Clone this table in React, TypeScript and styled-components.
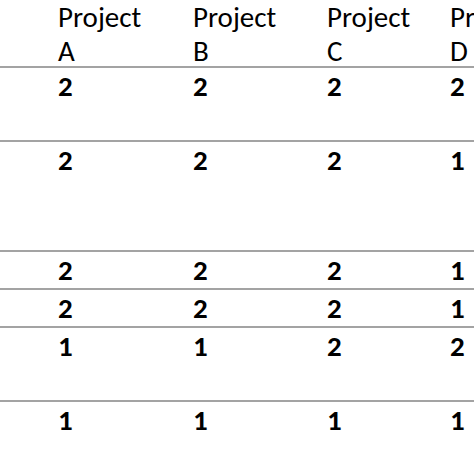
import styled, { createGlobalStyle } from "styled-components";

const GlobalStyle = createGlobalStyle`
    html, body {
        margin: 0;
        padding: 0;
        background: #ffffff;
        overflow: hidden;
    }
    body {
        font-family: Carlito, Calibri, Lato, "Liberation Sans", sans-serif;
    }
`;

const StyledPage = styled.div`
    width: 474px;
    height: 474px;
    overflow: hidden;
    background: #ffffff;
    color: #000000;
`;

const StyledTable = styled.div`
    font-size: 29px;
    line-height: 36px;
`;

const StyledRow = styled.div<{ $lines: number; $head?: boolean }>`
    display: grid;
    grid-template-columns: 58px 135px 134px 123px 1fr;
    height: ${(p) => (p.$head ? 66 : p.$lines * 36)}px;
    border-top: ${(p) => (p.$head ? "none" : "2px solid #a3a3a3")};
`;

const StyledHeadCell = styled.div`
    display: flex;
    flex-direction: column;
    gap: 2px;
    font-weight: normal;
    white-space: nowrap;
`;

const StyledHeadLine = styled.span<{ $height: number }>`
    line-height: ${(p) => p.$height}px;
`;

const StyledCell = styled.div`
    font-weight: bold;
    white-space: nowrap;
`;

const projects = ["A", "B", "C", "D"];

// 각 행: 라벨 줄 수 + 프로젝트별 값
const rows = [
    { lines: 2, values: [2, 2, 2, 2] },
    { lines: 3, values: [2, 2, 2, 1] },
    { lines: 1, values: [2, 2, 2, 1] },
    { lines: 1, values: [2, 2, 2, 1] },
    { lines: 2, values: [1, 1, 2, 2] },
    { lines: 2, values: [1, 1, 1, 1] },
];

const App = () => {
    return (
        <StyledPage>
            <GlobalStyle />
            <StyledTable>
                <StyledRow $lines={2} $head>
                    <StyledHeadCell />
                    {projects.map((p) => (
                        <StyledHeadCell key={p}>
                            <StyledHeadLine $height={35}>Project</StyledHeadLine>
                            <StyledHeadLine $height={29}>{p}</StyledHeadLine>
                        </StyledHeadCell>
                    ))}
                </StyledRow>
                {rows.map((row, i) => (
                    <StyledRow key={i} $lines={row.lines}>
                        <StyledCell />
                        {row.values.map((v, j) => (
                            <StyledCell key={j}>{v}</StyledCell>
                        ))}
                    </StyledRow>
                ))}
            </StyledTable>
        </StyledPage>
    );
};

export default App;
